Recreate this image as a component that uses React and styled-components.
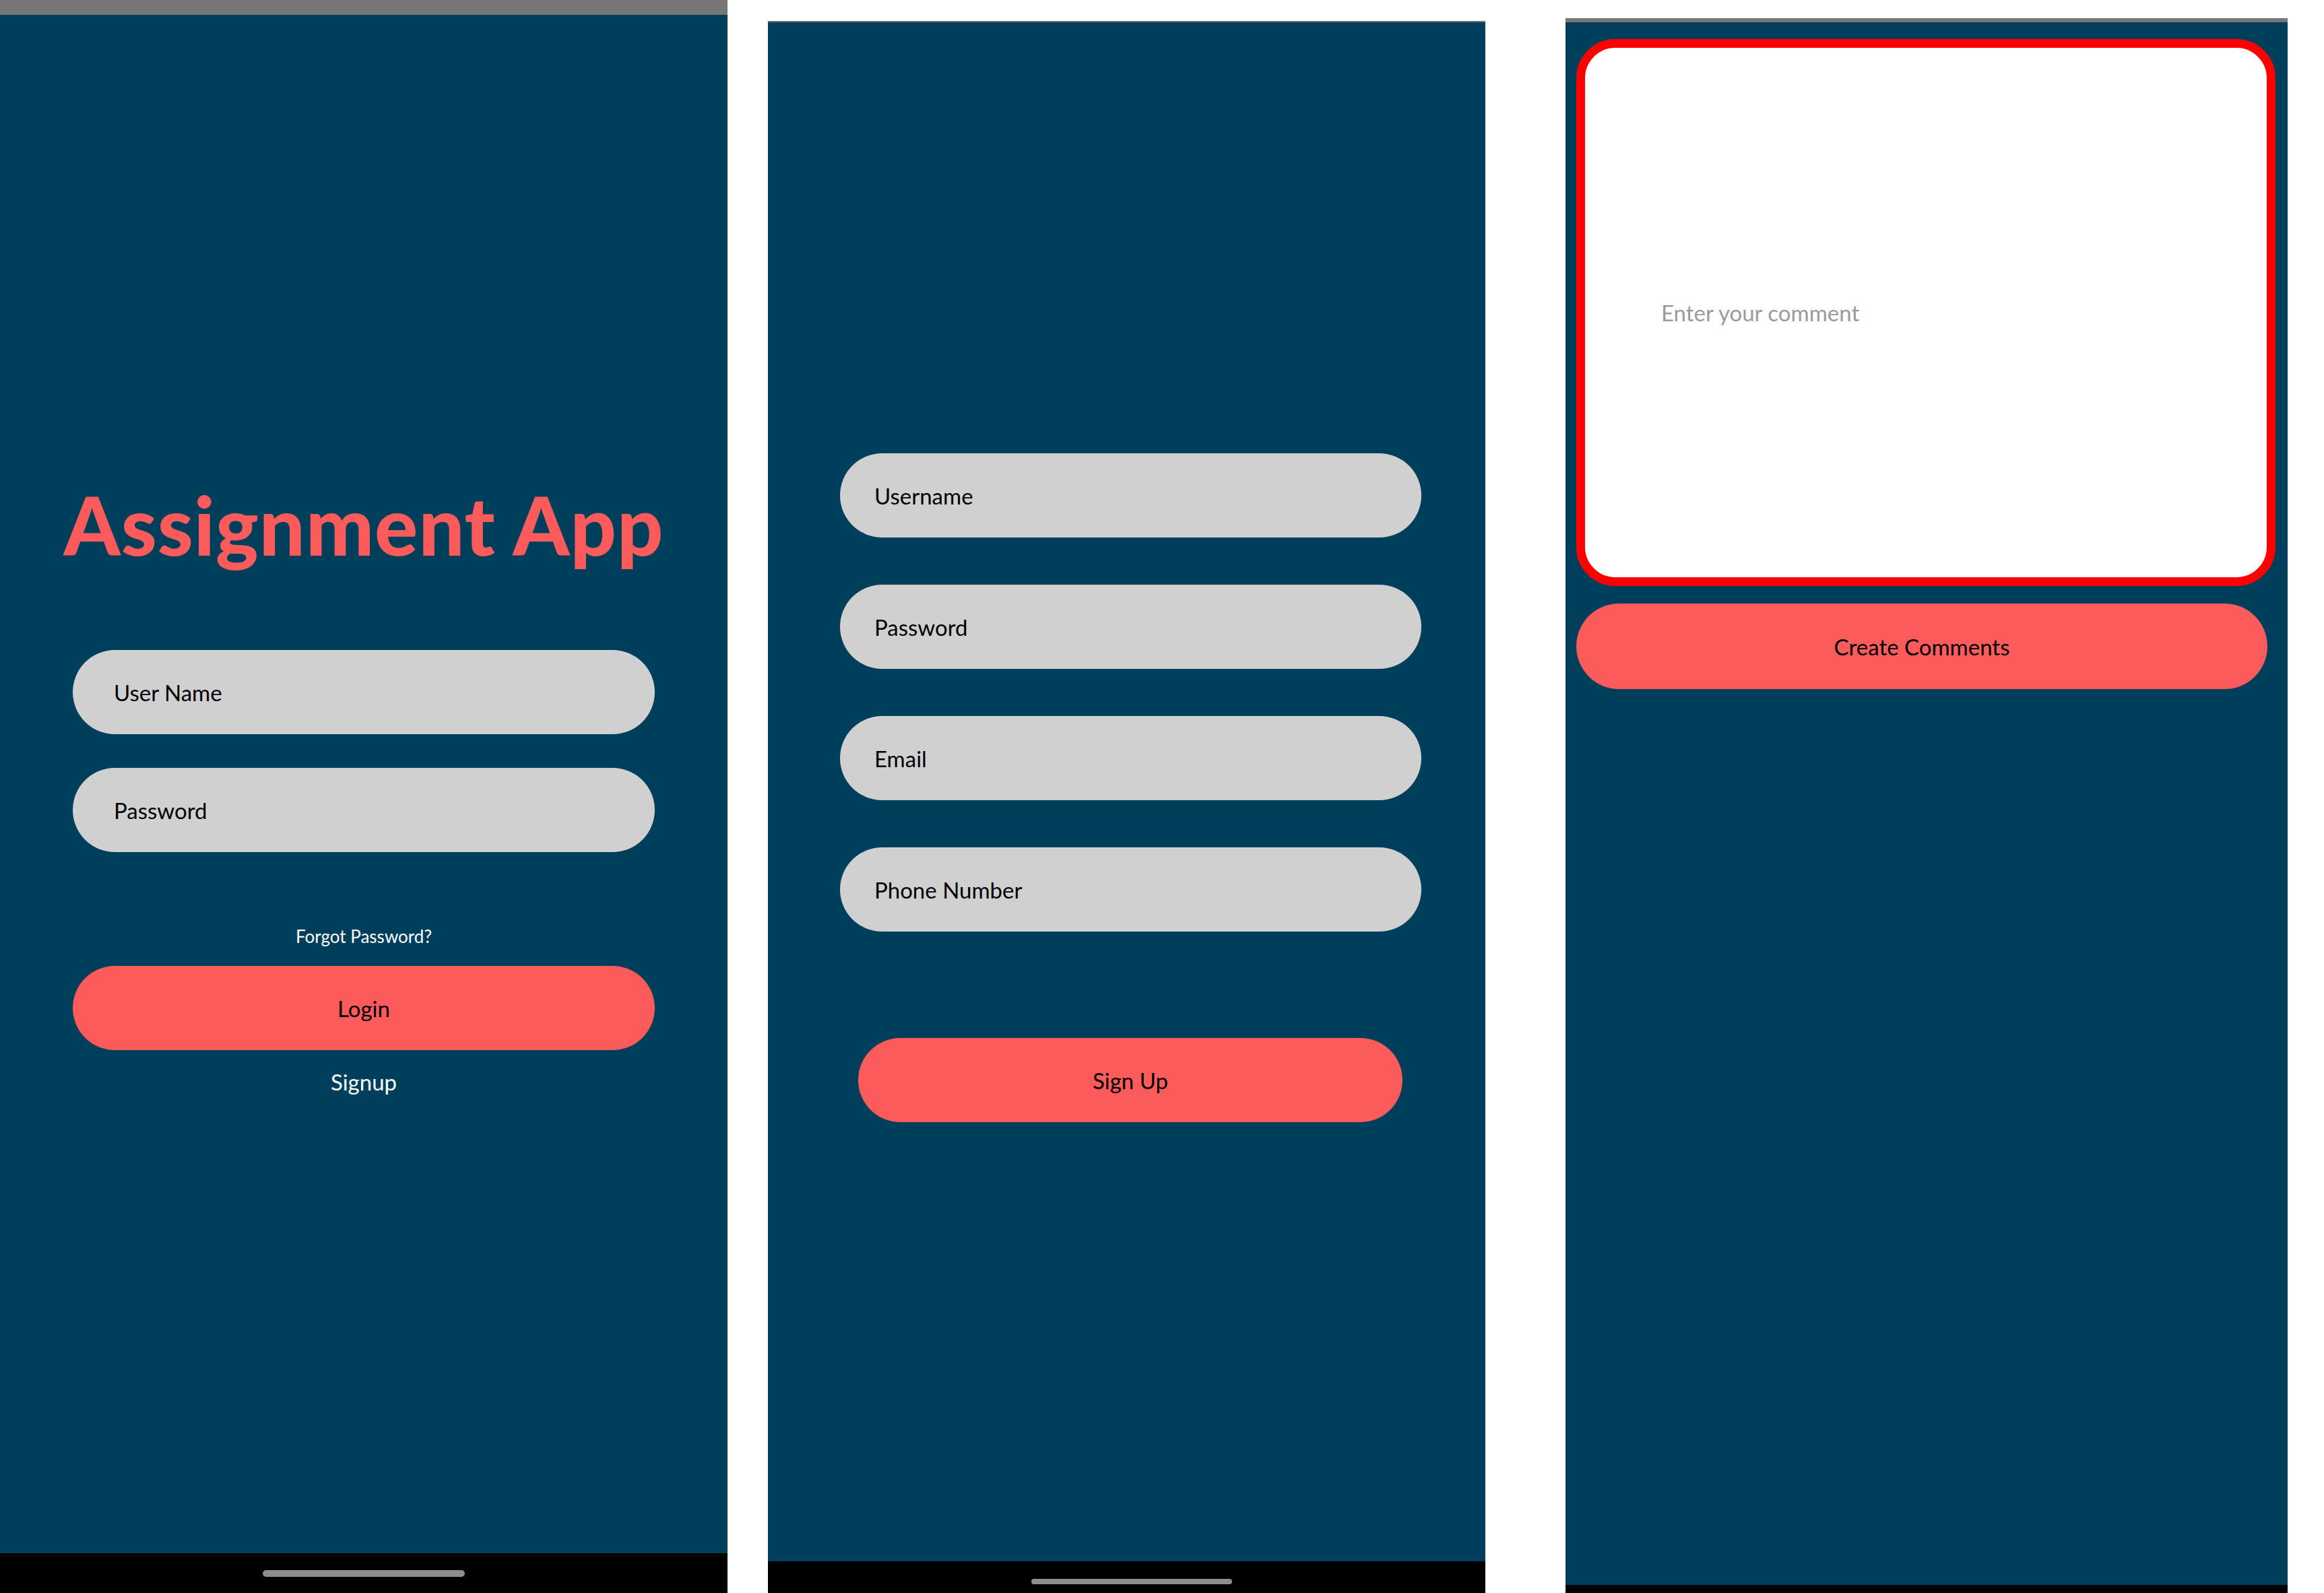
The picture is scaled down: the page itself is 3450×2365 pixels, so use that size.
import React from "react";
import styled, { createGlobalStyle } from "styled-components";

const GlobalStyle = createGlobalStyle`
  html, body { margin: 0; padding: 0; background: #ffffff; }
  body { font-family: "Lato", "Liberation Sans", sans-serif; }
  * { box-sizing: border-box; }
`;

const NAVY = "#003f5c";
const CORAL = "#fb5b5a";
const FIELD = "#d0d0d0";

const Page = styled.div`
  display: flex;
  align-items: flex-start;
  width: 3450px;
  height: 2365px;
  overflow: hidden;
  background: #ffffff;
`;

const Device = styled.div`
  display: flex;
  flex-direction: column;
  flex: none;
  width: ${(p) => p.$width}px;
  height: ${(p) => 2365 - p.$top}px;
  margin-top: ${(p) => p.$top}px;
  margin-left: ${(p) => p.$left}px;
`;

const StatusStrip = styled.div`
  flex: none;
  height: ${(p) => p.$h}px;
  background: #777777;
`;

const Screen = styled.div`
  flex: 1;
  display: flex;
  flex-direction: column;
  align-items: ${(p) => p.$align || "center"};
  padding: ${(p) => p.$pad || "0"};
  background: ${NAVY};
`;

const NavBar = styled.div`
  flex: none;
  height: ${(p) => p.$h}px;
  display: flex;
  justify-content: center;
  align-items: center;
  padding-left: ${(p) => p.$shift || 0}px;
  padding-top: ${(p) => p.$drop || 0}px;
  background: #000000;
`;

const HomePill = styled.div`
  width: ${(p) => p.$w}px;
  height: ${(p) => p.$hh}px;
  border-radius: 6px;
  background: #8e8e8e;
`;

const Title = styled.h1`
  margin: ${(p) => p.$top}px 0 0 0;
  font-family: "Lato", sans-serif;
  font-weight: 900;
  font-size: 120px;
  line-height: 120px;
  letter-spacing: 1px;
  color: ${CORAL};
  white-space: nowrap;
`;

const Field = styled.input`
  flex: none;
  display: block;
  width: ${(p) => p.$w}px;
  height: 125px;
  margin-top: ${(p) => p.$gap}px;
  padding: 0 0 0 ${(p) => p.$indent}px;
  border: none;
  outline: none;
  border-radius: 63px;
  background: ${FIELD};
  font-family: "Lato", sans-serif;
  font-size: 33px;
  color: #000000;
  &::placeholder {
    color: #000000;
    opacity: 1;
  }
`;

const LinkText = styled.div`
  margin-top: ${(p) => p.$gap}px;
  font-size: ${(p) => p.$size}px;
  line-height: ${(p) => p.$lh}px;
  color: #ffffff;
  text-align: center;
`;

const PillButton = styled.button`
  flex: none;
  display: flex;
  align-items: center;
  justify-content: center;
  width: ${(p) => p.$w}px;
  height: ${(p) => p.$h || 125}px;
  margin-top: ${(p) => p.$gap}px;
  margin-left: ${(p) => p.$ml || 0}px;
  padding: 0;
  border: none;
  border-radius: 64px;
  background: ${CORAL};
  font-family: "Lato", sans-serif;
  font-size: 33px;
  color: #000000;
  cursor: pointer;
`;

const CommentBox = styled.div`
  flex: none;
  display: flex;
  align-items: center;
  width: 1038px;
  height: 812px;
  padding-left: 113px;
  border: 13px solid #ff0000;
  border-radius: 58px;
  background: #ffffff;
`;

const Placeholder = styled.span`
  font-size: 33px;
  color: #9b9b9b;
`;

function LoginScreen() {
  return (
    <Device $left={0} $top={0} $width={1080}>
      <StatusStrip $h={22} />
      <Screen>
        <Title $top={697}>Assignment App</Title>
        <Field $w={864} $gap={126} $indent={61} placeholder="User Name" />
        <Field $w={864} $gap={50} $indent={61} placeholder="Password" type="password" />
        <LinkText $gap={110} $size={26} $lh={30}>Forgot Password?</LinkText>
        <PillButton $w={864} $gap={29}>Login</PillButton>
        <LinkText $gap={27} $size={33} $lh={40}>Signup</LinkText>
      </Screen>
      <NavBar $h={59}>
        <HomePill $w={300} $hh={10} />
      </NavBar>
    </Device>
  );
}

function SignupScreen() {
  return (
    <Device $left={60} $top={31} $width={1065}>
      <StatusStrip $h={2} />
      <Screen $align="flex-start" $pad="0 0 0 107px">
        <Field $w={863} $gap={640} $indent={51} placeholder="Username" />
        <Field $w={863} $gap={70} $indent={51} placeholder="Password" type="password" />
        <Field $w={863} $gap={70} $indent={51} placeholder="Email" />
        <Field $w={863} $gap={70} $indent={51} placeholder="Phone Number" />
        <PillButton $w={808} $gap={158} $ml={27}>Sign Up</PillButton>
      </Screen>
      <NavBar $h={47} $shift={14} $drop={12}>
        <HomePill $w={298} $hh={8} />
      </NavBar>
    </Device>
  );
}

function CommentScreen() {
  return (
    <Device $left={119} $top={27} $width={1072}>
      <StatusStrip $h={6} />
      <Screen $align="flex-start" $pad="25px 16px 0 16px">
        <CommentBox>
          <Placeholder>Enter your comment</Placeholder>
        </CommentBox>
        <PillButton $w={1026} $h={127} $gap={26}>Create Comments</PillButton>
      </Screen>
      <NavBar $h={12} />
    </Device>
  );
}

export default function App() {
  return (
    <>
      <GlobalStyle />
      <Page>
        <LoginScreen />
        <SignupScreen />
        <CommentScreen />
      </Page>
    </>
  );
}
